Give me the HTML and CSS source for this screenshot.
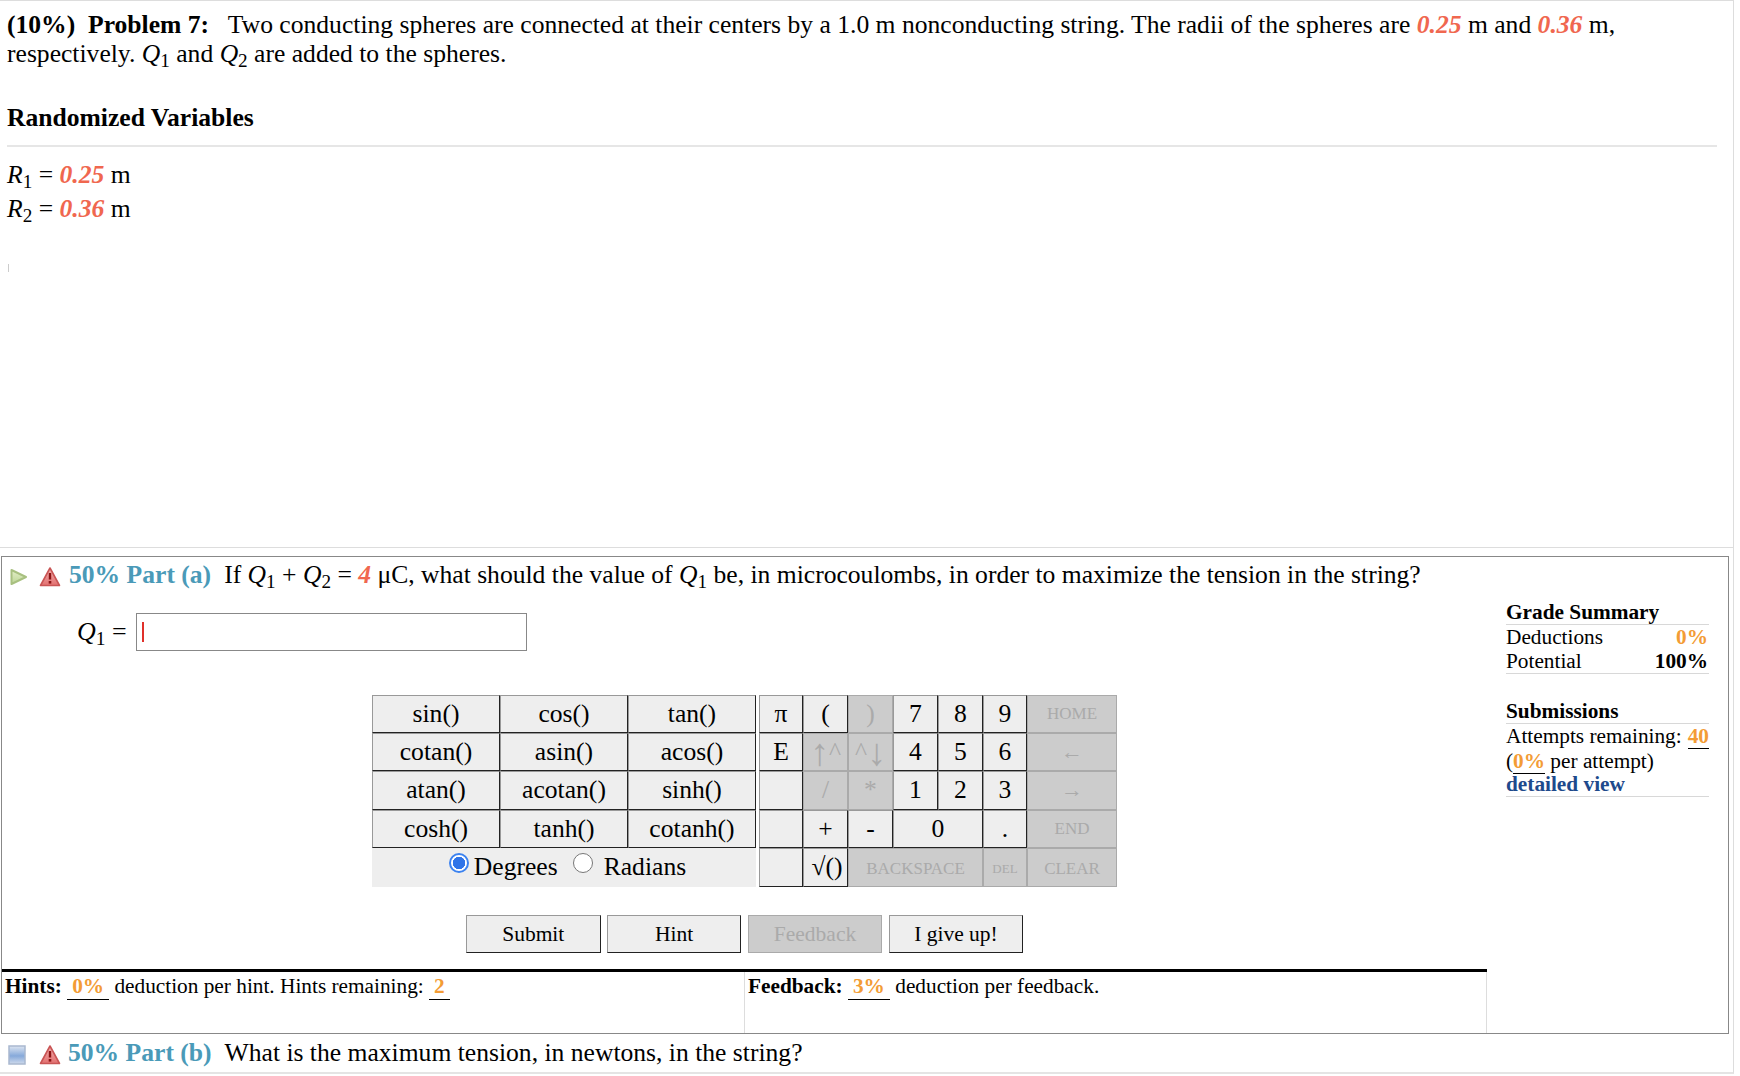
FILE: index.html
```html
<!DOCTYPE html>
<html lang="en">
<head>
<meta charset="utf-8">
<title>Problem 7</title>
<link rel="stylesheet" href="styles.css">
</head>
<body>
<div class="page">
  <section class="problem">
    <p class="statement"><b>(10%)&nbsp; Problem 7:</b>&nbsp;&nbsp; Two conducting spheres are connected at their centers by a 1.0 m nonconducting string. The radii of the spheres are <i class="var">0.25</i> m and <i class="var">0.36</i> m, respectively. <i>Q</i><sub>1</sub> and <i>Q</i><sub>2</sub> are added to the spheres.</p>
    <h2 class="rand-title">Randomized Variables</h2>
    <div class="rand-list">
      <div><i>R</i><sub>1</sub> = <i class="var">0.25</i> m</div>
      <div><i>R</i><sub>2</sub> = <i class="var">0.36</i> m</div>
    </div>
    <div class="tick"></div>
  </section>

  <section class="part-a">
    <div class="part-main">
      <div class="part-head">
        <svg class="ico-play" width="18" height="18" viewBox="0 0 18 18"><defs><linearGradient id="gp" x1="0" y1="0" x2="0" y2="1"><stop offset="0" stop-color="#e4efc8"/><stop offset="1" stop-color="#bcd596"/></linearGradient></defs><path d="M1.5 2 L16 9 L1.5 16 Z" fill="url(#gp)" stroke="#a8c080" stroke-width="2" stroke-linejoin="round"/></svg>
        <svg class="ico-warn" width="22" height="22" viewBox="0 0 22 22"><defs><linearGradient id="gw" x1="0" y1="0" x2="0" y2="1"><stop offset="0" stop-color="#f4b0b0"/><stop offset="1" stop-color="#e27070"/></linearGradient></defs><path d="M11 2 L20.5 19.5 L1.5 19.5 Z" fill="url(#gw)" stroke="#c95555" stroke-width="1.6" stroke-linejoin="round"/><path d="M11 7 V13.5" stroke="#8c1414" stroke-width="2.4"/><rect x="9.7" y="15" width="2.6" height="2.6" fill="#8c1414"/></svg>
        <span class="part-label">50% Part (a)</span>
        <span class="part-q">If <i>Q</i><sub>1</sub> + <i>Q</i><sub>2</sub> = <i class="var">4</i> μC, what should the value of <i>Q</i><sub>1</sub> be, in microcoulombs, in order to maximize the tension in the string?</span>
      </div>
      <div class="answer-row">
        <span class="answer-label"><i>Q</i><sub>1</sub> =</span>
        <div class="answer-box"><span class="caret"></span></div>
      </div>
      <div class="keypad">
        <div class="key">sin()</div><div class="key">cos()</div><div class="key">tan()</div><div class="gap"></div>
        <div class="key">π</div><div class="key">(</div><div class="key off">)</div><div class="key">7</div><div class="key">8</div><div class="key">9</div><div class="key off small">HOME</div>

        <div class="key">cotan()</div><div class="key">asin()</div><div class="key">acos()</div><div class="gap"></div>
        <div class="key">E</div><div class="key off"><span class="arrow">↑</span>^</div><div class="key off">^<span class="arrow">↓</span></div><div class="key">4</div><div class="key">5</div><div class="key">6</div><div class="key off small"><span class="side-arrow">←</span></div>

        <div class="key">atan()</div><div class="key">acotan()</div><div class="key">sinh()</div><div class="gap"></div>
        <div class="key"></div><div class="key off">/</div><div class="key off">*</div><div class="key">1</div><div class="key">2</div><div class="key">3</div><div class="key off small"><span class="side-arrow">→</span></div>

        <div class="key">cosh()</div><div class="key">tanh()</div><div class="key">cotanh()</div><div class="gap"></div>
        <div class="key"></div><div class="key">+</div><div class="key">-</div><div class="key wide">0</div><div class="key">.</div><div class="key off small">END</div>

        <div class="modes">
          <input class="radio" type="radio" name="mode" checked aria-label="Degrees"><span class="mode-text">Degrees</span>
          <input class="radio second" type="radio" name="mode" aria-label="Radians"><span class="mode-text">Radians</span>
        </div><div class="gap"></div>
        <div class="key"></div><div class="key root">√()</div><div class="key off small low wide3">BACKSPACE</div><div class="key off tiny low">DEL</div><div class="key off small low">CLEAR</div>
      </div>
      <div class="actions">
        <button class="act" type="button">Submit</button>
        <button class="act" type="button">Hint</button>
        <button class="act off" type="button" disabled>Feedback</button>
        <button class="act" type="button">I give up!</button>
      </div>
      <div class="info">
        <div class="info-cell hints"><b>Hints:</b> <span class="ul"><b class="orange">0%</b></span> deduction per hint. Hints remaining: <span class="ul"><b class="orange">2</b></span></div>
        <div class="info-cell feedback"><b>Feedback:</b> <span class="ul"><b class="orange">3%</b></span> deduction per feedback.</div>
      </div>
    </div>
    <aside class="side">
      <div class="side-title">Grade Summary</div>
      <div class="side-block first">
        <div class="side-row"><span>Deductions</span><b class="orange">0%</b></div>
        <div class="side-row"><span>Potential</span><b>100%</b></div>
      </div>
      <div class="side-title second">Submissions</div>
      <div class="side-block">
        <div class="side-row"><span>Attempts remaining:</span><b class="orange under">40</b></div>
        <div>(<b class="orange under">0%</b> per attempt)</div>
        <div class="side-last"><a class="link" href="#">detailed view</a></div>
      </div>
    </aside>
  </section>

  <section class="part-b">
    <svg class="ico-box" width="18" height="20" viewBox="0 0 18 20"><defs><linearGradient id="gb" x1="0" y1="0" x2="0" y2="1"><stop offset="0" stop-color="#dde5f1"/><stop offset="0.55" stop-color="#86a9da"/><stop offset="1" stop-color="#cfdaec"/></linearGradient></defs><rect x="1" y="1" width="16" height="18" fill="url(#gb)" stroke="#a9b8cf" stroke-width="1.5"/></svg>
    <svg class="ico-warn" width="22" height="22" viewBox="0 0 22 22"><path d="M11 2 L20.5 19.5 L1.5 19.5 Z" fill="url(#gw)" stroke="#c95555" stroke-width="1.6" stroke-linejoin="round"/><path d="M11 7 V13.5" stroke="#8c1414" stroke-width="2.4"/><rect x="9.7" y="15" width="2.6" height="2.6" fill="#8c1414"/></svg>
    <span class="part-label">50% Part (b)</span>
    <span class="part-q">What is the maximum tension, in newtons, in the string?</span>
  </section>
</div>
</body>
</html>
```
FILE: styles.css
```css
* { box-sizing: border-box; }
html, body { margin: 0; padding: 0; background: #fff; }
body { font-family: "Liberation Serif", "Times New Roman", serif; font-size: 25.6px; color: #000; }
sub { font-size: 0.75em; line-height: 0; vertical-align: -0.25em; }
.var { color: #f0674f; font-weight: bold; }
.orange { color: #f39c35; }

.page { width: 1734px; height: 1074px; border-top: 1px solid #ddd; border-right: 1px solid #ddd; border-bottom: 2px solid #e4e4e4; overflow: hidden; }

.problem { height: 547px; padding: 9px 16px 0 7px; border-bottom: 1px solid #ddd; }
.statement { margin: 0; line-height: 29px; }
.rand-title { margin: 35px 0 0; font-size: 25.6px; line-height: 30px; padding-bottom: 12px; border-bottom: 2px solid #e6e6e6; font-weight: bold; }
.rand-list { margin-top: 11px; line-height: 34px; }
.tick { width: 1px; height: 8px; margin: 38px 0 0 1px; background: #ccc; }

.part-a { display: flex; width: 1728px; height: 478px; margin: 8px 0 0 1px; border: 1px solid #888; }
.part-main { width: 1485px; flex: none; display: flex; flex-direction: column; }

.part-head { display: flex; align-items: center; height: 35px; padding-left: 8px; }
.ico-play { flex: none; margin-top: 5px; }
.ico-warn { flex: none; margin: 4px 0 0 11px; }
.part-label { margin-left: 8px; font-weight: bold; color: #4a9ab8; white-space: pre; }
.part-q { margin-left: 13px; white-space: nowrap; }

.answer-row { display: flex; align-items: center; margin-top: 21px; height: 38px; padding-left: 75px; }
.answer-label { width: 59px; white-space: nowrap; font-size: 26px; }
.answer-box { width: 391px; height: 38px; border: 1px solid #888; display: flex; align-items: center; padding-left: 5px; }
.caret { width: 2px; height: 20px; background: #e0302a; }

.keypad { display: grid; grid-template-columns: 128px 128px 128px 3px 44px 45px 45px 45px 45px 44px 90px; grid-template-rows: 38px 38px 39px 38px 39px; margin: 44px 0 0 370px; width: 745px; }
.key { display: flex; align-items: center; justify-content: center; background: #eee; border: 1px solid; border-color: #999 #222 #222 #999; font-size: 25.6px; padding-bottom: 1px; white-space: nowrap; }
.key.off { background: #ccc; color: #aaa; border-color: #aaa; }
.key.small { font-size: 17px; }
.key.tiny { font-size: 13px; }
.key.low { padding: 2px 0 0; }
.key.wide { grid-column: span 2; }
.key.wide3 { grid-column: span 3; }
.key.root { padding-left: 3px; }
.arrow { font-size: 38px; line-height: 0; }
.side-arrow { font-size: 22px; line-height: 0; }
.gap { background: #fff; }

.modes { grid-column: span 3; background: #eee; display: flex; align-items: flex-start; justify-content: center; padding: 4px 0 0 7px; }
.mode-text { line-height: 30px; }
.radio { appearance: none; width: 20px; height: 20px; margin: 1px 5px 0 0; border: 1px solid #777; border-radius: 50%; background: #fff; flex: none; }
.radio:checked { border: 2px solid #3b82f0; background: radial-gradient(circle, #2f74e8 0 6px, #fff 6.5px); }
.radio.second { margin-left: 15px; margin-right: 11px; }

.actions { display: flex; margin: 28px 0 0 464px; gap: 6.4px; }
.act { width: 134.5px; height: 38px; padding: 0; background: #eee; border: 1px solid; border-color: #999 #222 #222 #999; font-family: inherit; font-size: 21.5px; color: #000; }
.act.off { background: #ccc; color: #aaa; border-color: #aaa; }

.info { display: flex; margin-top: 16px; flex: 1; border-top: 3px solid #000; font-size: 21.3px; }
.info-cell { padding: 0 3px 0; line-height: 28px; white-space: nowrap; }
.hints { width: 743px; border-right: 1px solid #ddd; }
.feedback { flex: 1; border-right: 1px solid #ddd; }
.ul { display: inline-block; padding: 0 5px; border-bottom: 1px solid #000; line-height: 26px; }

.side { flex: 1; padding: 43px 19px 0 19px; font-size: 21.3px; line-height: 24px; }
.side-title { font-weight: bold; font-size: 21.3px; border-bottom: 1px solid #d8d8d8; height: 25px; }
.side-title.second { margin-top: 25px; }
.side-block { border-bottom: 1px solid #d8d8d8; }
.side-block.first { padding-right: 1px; }
.side-row { display: flex; justify-content: space-between; }
.side-last { line-height: 23px; }
.under { border-bottom: 1px solid #000; }
.link { color: #1e4a8c; font-weight: bold; text-decoration: none; }

.part-b { display: flex; align-items: center; height: 36px; padding-left: 8px; margin-top: 1px; }
.ico-box { flex: none; margin-top: 3px; }
.part-b .ico-warn { margin-left: 13px; margin-top: 3px; }
.part-b .part-label { margin-left: 7px; }
.part-b .part-q { margin-left: 13px; }
```
